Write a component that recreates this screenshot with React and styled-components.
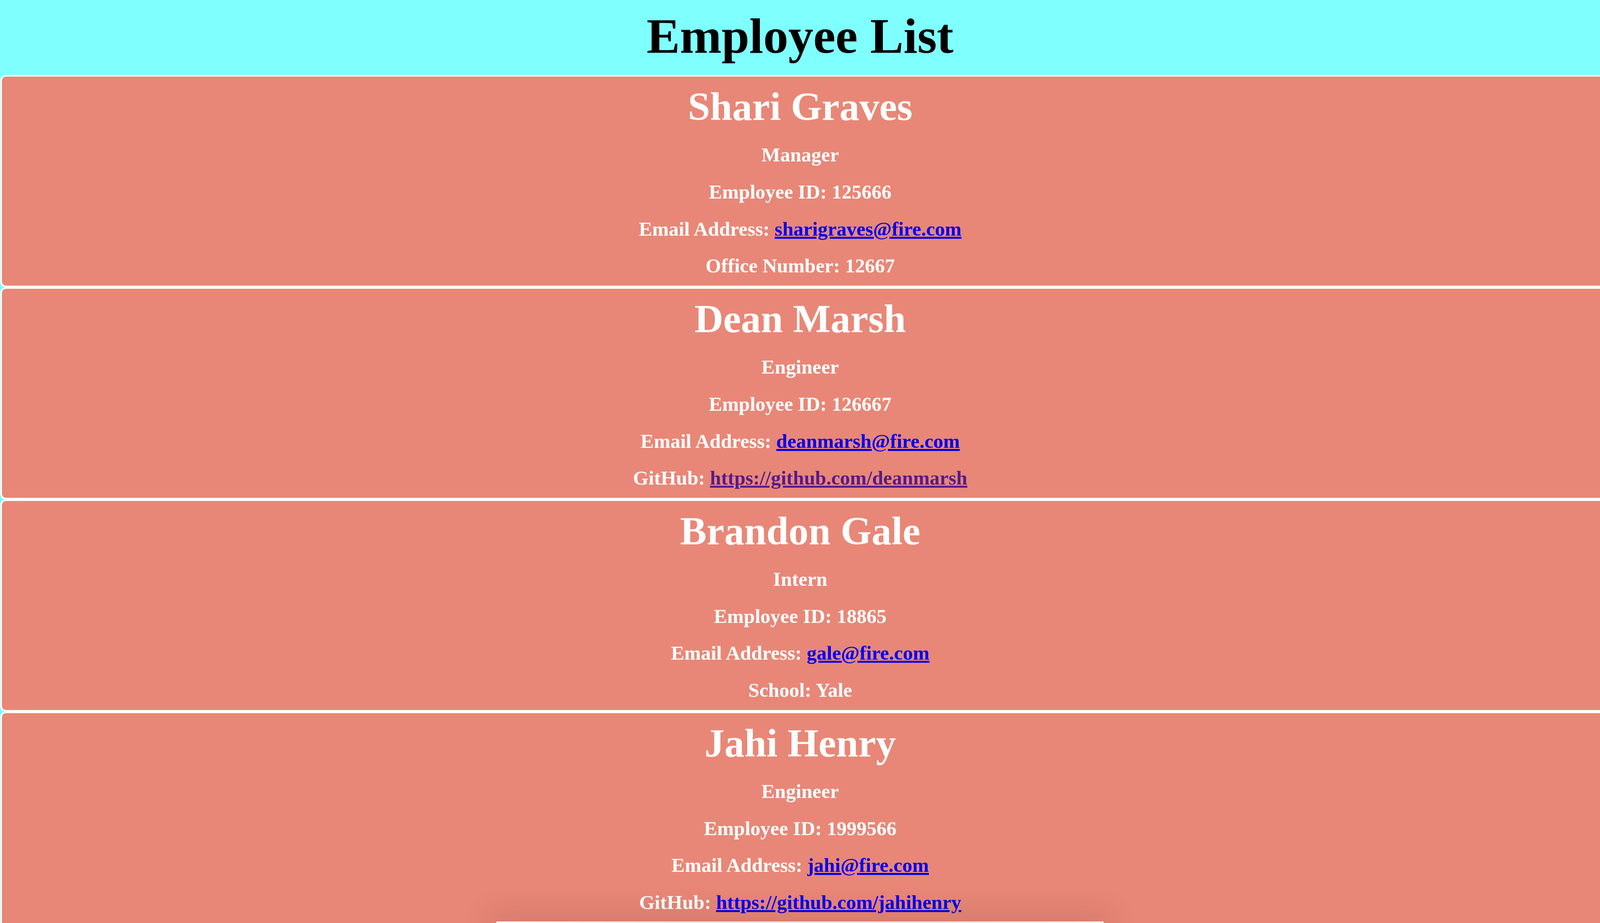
import React from "react";
import styled, { createGlobalStyle } from "styled-components";

const GlobalStyle = createGlobalStyle`
    html, body {
        margin: 0;
        padding: 0;
        background-color: #80FFFF;
        overflow: hidden;
        font-family: "Liberation Serif", "Times New Roman", serif;
    }
    * {
        box-sizing: border-box;
    }
`

const Header = styled("header")({
    backgroundColor: "#80FFFF",
    padding: "19px 0 26px",
    textAlign: "center",
})
const Title = styled("h1")({
    margin: 0,
    fontSize: "128px",
    lineHeight: 1.15,
    fontWeight: "bold",
    color: "#000000",
})
const List = styled("main")({
    display: "flex",
    flexDirection: "column",
})
const Card = styled("section")({
    // wider than the window, the right edge runs off the page
    width: "calc(100% + 40px)",
    marginLeft: "1px",
    backgroundColor: "#E88777",
    border: "4px solid #FFFFFF",
    borderRadius: "14px",
    padding: "18px 41px 21px 0",
    display: "flex",
    flexDirection: "column",
    alignItems: "center",
    gap: "36px",
    color: "#FFFFFF",
    "&:last-child": {
        paddingBottom: "80px",
    },
})
const Name = styled("h2")({
    margin: 0,
    fontSize: "102px",
    lineHeight: 1.15,
    fontWeight: "bold",
})
const Line = styled("p")({
    margin: 0,
    fontSize: "51px",
    lineHeight: 1.15,
    fontWeight: "bold",
})
const Link = styled("a")`
    color: ${(p) => (p.$visited ? "#551A8B" : "#0000EE")};
    text-decoration: underline;
`
// shadow of the window below the page, seen at the bottom of the screenshot
const DockShadow = styled("div")({
    position: "fixed",
    left: "31%",
    width: "38%",
    bottom: 0,
    height: "4px",
    background: "linear-gradient(90deg, #f6f6f6, #e6e6e6 30%, #e6e6e6 70%, #f0f0f0)",
    boxShadow: "0 0 70px 24px rgba(80, 30, 20, 0.14)",
    borderRadius: "40px 40px 0 0",
})

const employees = [
    { name: "Shari Graves", role: "Manager", id: "125666", email: "sharigraves@fire.com", extra: { label: "Office Number", value: "12667" } },
    { name: "Dean Marsh", role: "Engineer", id: "126667", email: "deanmarsh@fire.com", extra: { label: "GitHub", link: "https://github.com/deanmarsh", visited: true } },
    { name: "Brandon Gale", role: "Intern", id: "18865", email: "gale@fire.com", extra: { label: "School", value: "Yale" } },
    { name: "Jahi Henry", role: "Engineer", id: "1999566", email: "jahi@fire.com", extra: { label: "GitHub", link: "https://github.com/jahihenry" } },
]

function EmployeeCard({ emp }) {
    return (
        <Card>
            <Name>{emp.name}</Name>
            <Line>{emp.role}</Line>
            <Line>Employee ID: {emp.id}</Line>
            <Line>Email Address: <Link href={"mailto:" + emp.email}>{emp.email}</Link></Line>
            <Line>
                {emp.extra.label}:{" "}
                {emp.extra.link
                    ? <Link href={emp.extra.link} $visited={emp.extra.visited}>{emp.extra.link}</Link>
                    : emp.extra.value}
            </Line>
        </Card>
    )
}

export default function App() {
    return (
        <>
            <GlobalStyle />
            <Header>
                <Title>Employee List</Title>
            </Header>
            <List>
                {employees.map((emp) => (
                    <EmployeeCard key={emp.id} emp={emp} />
                ))}
            </List>
            <DockShadow />
        </>
    )
}
